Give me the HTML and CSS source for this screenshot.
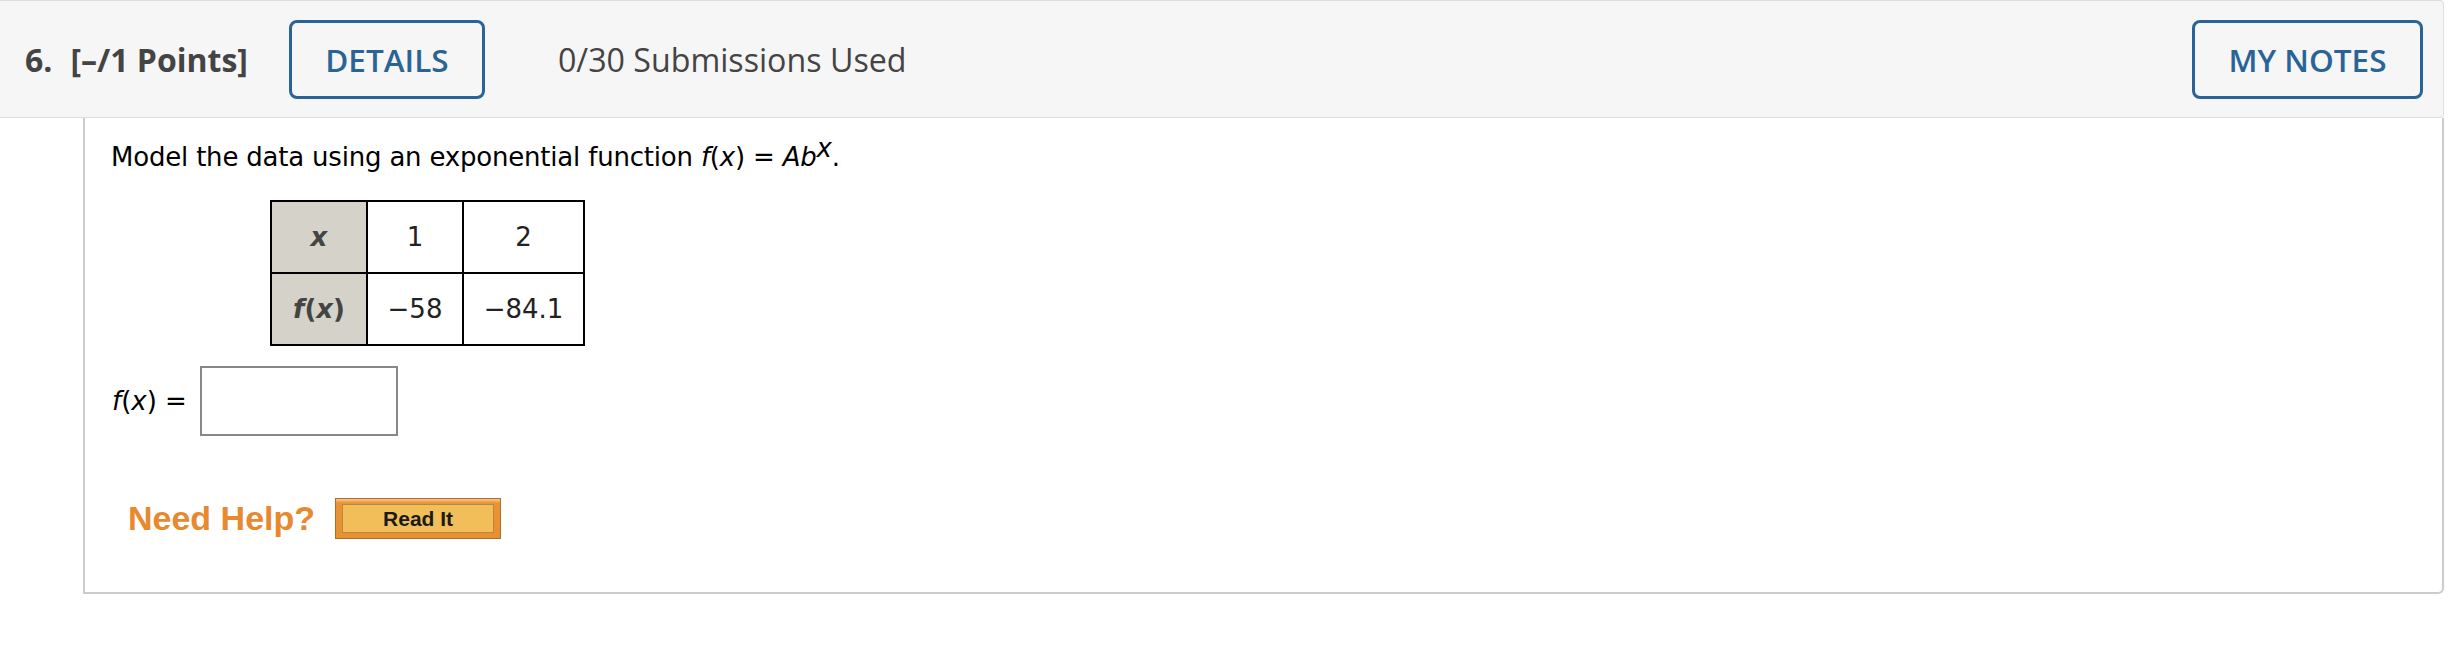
FILE: index.html
```html
<!DOCTYPE html>
<html>
<head>
<meta charset="utf-8">
<link rel="stylesheet" href="styles.css">
</head>
<body>
<div class="question">
  <div class="q-header">
    <div class="q-title"><span class="q-num">6.</span><span class="q-points">[–/1 Points]</span></div>
    <button class="btn-outline details">DETAILS</button>
    <div class="q-subs">0/30 Submissions Used</div>
    <div class="spacer"></div>
    <button class="btn-outline notes">MY NOTES</button>
  </div>
  <div class="q-body">
    <p class="prompt">Model the data using an exponential function <i>f</i>(<i>x</i>) = <i>Ab</i><sup><i>x</i></sup>.</p>
    <table class="data">
      <tr>
        <th><i>x</i></th>
        <td class="c1">1</td>
        <td class="c2">2</td>
      </tr>
      <tr>
        <th><i>f</i>(<i>x</i>)</th>
        <td class="c1">−58</td>
        <td class="c2">−84.1</td>
      </tr>
    </table>
    <div class="answer">
      <span class="ans-label"><i>f</i>(<i>x</i>) =</span>
      <span class="ans-box"></span>
    </div>
    <div class="help">
      <span class="need-help">Need Help?</span>
      <span class="read-it"><span class="read-it-inner">Read It</span></span>
    </div>
  </div>
</div>
</body>
</html>
```
FILE: styles.css
```css
html, body {
  margin: 0;
  padding: 0;
  background: #ffffff;
}

.question {
  width: 2444px;
}

.q-header {
  display: flex;
  align-items: center;
  height: 116px;
  background: #f6f6f6;
  border-top: 1px solid #dedede;
  border-bottom: 1px solid #dcdcdc;
  border-right: 1px solid #dedede;
  border-radius: 0 4px 4px 0;
  padding: 0 20px 0 25px;
  font-family: "Open Sans", sans-serif;
  color: #444444;
}

.q-title {
  font-weight: 700;
  font-size: 32px;
  white-space: nowrap;
}

.q-points {
  margin-left: 18px;
}

.btn-outline {
  font-family: "Open Sans", sans-serif;
  font-weight: 600;
  font-size: 31.5px;
  color: #2a6496;
  background: transparent;
  border: 3px solid #2a6496;
  border-radius: 8px;
  height: 79px;
  box-sizing: border-box;
  padding: 0;
  display: flex;
  align-items: center;
  justify-content: center;
}

.details {
  width: 196px;
  margin-left: 41px;
}

.notes {
  width: 231px;
}

.q-subs {
  font-size: 32.2px;
  margin-left: 73px;
  white-space: nowrap;
}

.spacer {
  flex: 1;
}

.q-body {
  margin-left: 83px;
  height: 476px;
  box-sizing: border-box;
  border-left: 2px solid #cccccc;
  border-right: 2px solid #cccccc;
  border-bottom: 2px solid #cccccc;
  border-radius: 0 0 6px 0;
  padding: 24px 0 0 26px;
  font-family: "DejaVu Sans", Verdana, sans-serif;
  font-size: 26px;
  color: #000000;
}

.prompt {
  margin: 0;
  line-height: 30px;
  letter-spacing: -0.2px;
}

.prompt sup {
  font-size: 26px;
  vertical-align: 9px;
  line-height: 0;
}

.data {
  margin: 28px 0 0 159px;
  border-collapse: separate;
  border-spacing: 0;
  border-top: 2px solid #000;
  border-left: 2px solid #000;
  font-size: 26px;
}

.data th,
.data td {
  height: 70px;
  padding: 0;
  text-align: center;
  border-right: 2px solid #000;
  border-bottom: 2px solid #000;
  box-sizing: content-box;
}

.data th {
  width: 94px;
  background: #d5d2ca;
  color: #444444;
  font-weight: 700;
}

.data td {
  color: #222222;
}

.data td.c1 {
  width: 94px;
}

.data td.c2 {
  width: 119px;
}

.answer {
  display: flex;
  align-items: center;
  margin-top: 20px;
  gap: 13px;
}

.ans-label {
  padding-left: 1px;
  font-size: 26px;
}

.ans-box {
  display: block;
  width: 198px;
  height: 70px;
  box-sizing: border-box;
  border: 2px solid #888888;
  background: #fff;
}

.help {
  display: flex;
  align-items: center;
  margin-top: 62px;
  margin-left: 17px;
}

.need-help {
  font-family: "Liberation Sans", Arial, sans-serif;
  font-weight: 700;
  font-size: 34px;
  color: #e8892f;
  margin-right: 20px;
}

.read-it {
  display: block;
  width: 166px;
  height: 41px;
  box-sizing: border-box;
  border: 1px solid #a8702f;
  background: linear-gradient(#f6c89a 0, #e99335 4px, #e8902f 100%);
  padding: 5px 6px;
}

.read-it-inner {
  display: flex;
  align-items: center;
  justify-content: center;
  height: 100%;
  box-sizing: border-box;
  border: 1px solid #b88746;
  background: #f2be5a;
  font-family: "Liberation Sans", Arial, sans-serif;
  font-weight: 700;
  font-size: 21px;
  color: #1a1a1a;
}
```
